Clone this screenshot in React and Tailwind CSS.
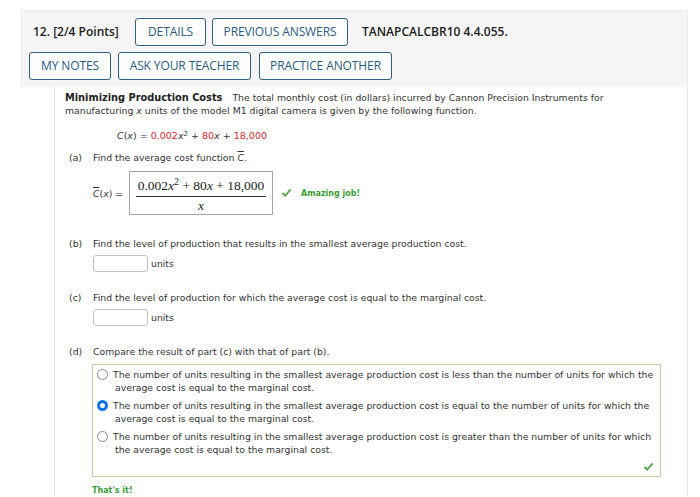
import React from 'react';

const hdr = { fontFamily: '"Open Sans", "Liberation Sans", sans-serif' };
const body = { fontFamily: '"DejaVu Sans", Verdana, sans-serif' };
const serif = { fontFamily: '"Liberation Serif", "DejaVu Serif", serif' };

function Btn({ w, children }) {
  return (
    <div
      className={`${w} h-[28px] flex items-center justify-center rounded-[3px] border-[1.5px] border-[#31607f] bg-white text-[12px] font-medium text-[#2a5a7d] tracking-[-0.1px]`}
    >
      {children}
    </div>
  );
}

function Check({ className }) {
  return (
    <svg viewBox="0 0 12 11" className={className}>
      <path d="M0.8 6.2 L2.6 4.7 L4.6 6.9 L9.8 0.9 L11.4 2.2 L4.7 10 Z" fill="#5ba552" />
    </svg>
  );
}

function Radio({ on }) {
  if (on) {
    return <span className="mt-[1px] w-[11px] h-[11px] shrink-0 rounded-full border-[3.5px] border-[#1071e5] bg-white" />;
  }
  return <span className="mt-[1px] w-[11px] h-[11px] shrink-0 rounded-full border border-[#8a8a8a] bg-white" />;
}

const choices = [
  ['The number of units resulting in the smallest average production cost is less than the number of units for which the', 'average cost is equal to the marginal cost.'],
  ['The number of units resulting in the smallest average production cost is equal to the number of units for which the', 'average cost is equal to the marginal cost.'],
  ['The number of units resulting in the smallest average production cost is greater than the number of units for which', 'the average cost is equal to the marginal cost.'],
];

export default function App() {
  return (
    <div className="w-[700px] h-[497px] overflow-hidden bg-white text-[#333]">
      {/* question header */}
      <div
        style={hdr}
        className="mt-[10px] ml-[21px] w-[667px] bg-[#f5f5f5] border border-[#ebebeb] border-b-0 pl-[7px] pt-[7px] pb-[7px] flex flex-col gap-[6px]"
      >
        <div className="flex items-center">
          <span className="pl-[4px] w-[106px] text-[12px] font-semibold text-[#222]">12. [2/4 Points]</span>
          <div className="flex gap-[6px]">
            <Btn w="w-[71px]">DETAILS</Btn>
            <Btn w="w-[136px]">PREVIOUS ANSWERS</Btn>
          </div>
          <span className="ml-[14px] text-[12px] font-semibold text-[#222]">TANAPCALCBR10 4.4.055.</span>
        </div>
        <div className="flex items-center gap-[7px]">
          <Btn w="w-[82px]">MY NOTES</Btn>
          <Btn w="w-[133px]">ASK YOUR TEACHER</Btn>
          <div className="ml-[1px]">
            <Btn w="w-[133px]">PRACTICE ANOTHER</Btn>
          </div>
        </div>
      </div>

      {/* question body */}
      <div
        style={body}
        className="ml-[54px] w-[634px] h-[410px] border-l border-r border-[#e6e6e6] pl-[10px] pt-[4px] text-[9.3px] leading-[13px]"
      >
        <div className="flex items-baseline">
          <span className="font-bold text-[9.8px] text-[#222]">Minimizing Production Costs</span>
          <span className="ml-[10px]">
            The total monthly cost (in dollars) incurred by Cannon Precision Instruments for
          </span>
        </div>
        <div>
          manufacturing <i>x</i> units of the model M1 digital camera is given by the following function.
        </div>

        <p className="mt-[12px] pl-[52px] text-[9.5px]">
          <i>C</i>(<i>x</i>) = <span className="text-[#d6262f]">0.002</span><i>x</i>
          <sup className="text-[7px]">2</sup> + <span className="text-[#d6262f]">80</span><i>x</i> +{' '}
          <span className="text-[#d6262f]">18,000</span>
        </p>

        <div className="mt-[9px] flex">
          <span className="w-[28px] pl-[4px]">(a)</span>
          <span>
            Find the average cost function <span className="overline"><i>C</i></span>.
          </span>
        </div>

        <div className="mt-[7px] ml-[28px] flex items-center">
          <span className="w-[36px]">
            <span className="overline"><i>C</i></span>(<i>x</i>) =
          </span>
          <div
            style={serif}
            className="w-[144px] h-[44px] border border-[#a3a3a3] flex flex-col items-center justify-center pt-[5px] text-[13.5px] leading-none text-[#222]"
          >
            <div className="border-b border-[#333] px-[2px] pb-[3px]">
              0.002<i>x</i>
              <sup className="text-[10px]">2</sup> + 80<i>x</i> + 18,000
            </div>
            <div className="pt-[2px]">
              <i>x</i>
            </div>
          </div>
          <Check className="ml-[8px] w-[11px] h-[10px]" />
          <span className="ml-[9px] font-bold text-[8px] text-[#3a9c35]">Amazing job!</span>
        </div>

        <div className="mt-[22px] flex">
          <span className="w-[28px] pl-[4px]">(b)</span>
          <span>Find the level of production that results in the smallest average production cost.</span>
        </div>
        <div className="mt-[5px] ml-[28px] flex items-center">
          <div className="w-[55px] h-[17px] rounded-[3px] border border-[#c2c2c2] bg-white" />
          <span className="ml-[3px]">units</span>
        </div>

        <div className="mt-[19px] flex">
          <span className="w-[28px] pl-[4px]">(c)</span>
          <span>Find the level of production for which the average cost is equal to the marginal cost.</span>
        </div>
        <div className="mt-[5px] ml-[28px] flex items-center">
          <div className="w-[55px] h-[17px] rounded-[3px] border border-[#c2c2c2] bg-white" />
          <span className="ml-[3px]">units</span>
        </div>

        <div className="mt-[19px] flex">
          <span className="w-[28px] pl-[4px]">(d)</span>
          <span>Compare the result of part (c) with that of part (b).</span>
        </div>

        <div className="mt-[6px] ml-[27px] w-[569px] h-[113px] border-[1.5px] border-[#b4d3a0] pl-[4px] pt-[3px] flex flex-col gap-[5px]">
          {choices.map((c, i) => (
            <div key={i} className="flex gap-[5px]">
              <Radio on={i === 1} />
              <div>
                <div>{c[0]}</div>
                <div className="pl-[2px]">{c[1]}</div>
              </div>
            </div>
          ))}
          <div className="flex justify-end pr-[6px] mt-[1px]">
            <Check className="w-[11px] h-[10px]" />
          </div>
        </div>

        <p className="mt-[7px] ml-[27px] font-bold text-[8px] text-[#3a9c35]">That's it!</p>
      </div>
    </div>
  );
}
